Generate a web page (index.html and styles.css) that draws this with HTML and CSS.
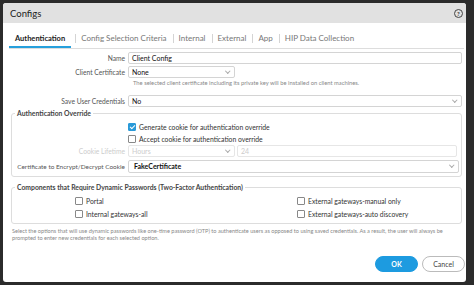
FILE: index.html
```html
<!DOCTYPE html>
<html lang="en">
<head>
  <meta charset="UTF-8" />
  <title>Configs</title>
  <link rel="stylesheet" href="styles.css">
</head>
<body>

  <div class="dialog">
    <header class="dlg-head">
      <h1>Configs</h1>
      <span class="help">?</span>
    </header>

    <nav class="tabs">
      <a href="#" class="tab active">Authentication</a>
      <span class="sep"></span>
      <a href="#" class="tab">Config Selection Criteria</a>
      <span class="sep"></span>
      <a href="#" class="tab">Internal</a>
      <span class="sep"></span>
      <a href="#" class="tab">External</a>
      <span class="sep"></span>
      <a href="#" class="tab">App</a>
      <span class="sep"></span>
      <a href="#" class="tab">HIP Data Collection</a>
    </nav>

    <div class="form">
      <div class="row">
        <label>Name</label>
        <div class="field grow">Client Config</div>
      </div>
      <div class="row">
        <label>Client Certificate</label>
        <div class="field select short">None<span class="chev"></span></div>
      </div>
      <p class="hint">The selected client certificate including its private key will be installed on client machines.</p>
      <div class="row">
        <label>Save User Credentials</label>
        <div class="field select grow">No<span class="chev"></span></div>
      </div>

      <!-- Authentication Override -->
      <fieldset class="group override">
        <legend>Authentication Override</legend>
        <div class="row check-row">
          <label></label>
          <span class="box checked"></span>Generate cookie for authentication override
        </div>
        <div class="row check-row">
          <label></label>
          <span class="box"></span>Accept cookie for authentication override
        </div>
        <div class="row disabled">
          <label>Cookie Lifetime</label>
          <div class="field select short">Hours<span class="chev"></span></div>
          <div class="field grow">24</div>
        </div>
        <div class="row cert-row">
          <label>Certificate to Encrypt/Decrypt Cookie</label>
          <div class="field select grow cert">FakeCertificate<span class="chev"></span></div>
        </div>
      </fieldset>

      <!-- Two-Factor -->
      <fieldset class="group components">
        <legend>Components that Require Dynamic Passwords (Two-Factor Authentication)</legend>
        <div class="checks">
          <div class="check-row"><span class="box"></span>Portal</div>
          <div class="check-row"><span class="box"></span>External gateways-manual only</div>
          <div class="check-row"><span class="box"></span>Internal gateways-all</div>
          <div class="check-row"><span class="box"></span>External gateways-auto discovery</div>
        </div>
      </fieldset>
      <p class="note">Select the options that will use dynamic passwords like one-time password (OTP) to authenticate users as opposed to using saved credentials. As a result, the user will always be prompted to enter new credentials for each selected option.</p>
    </div>

    <footer class="dlg-foot">
      <button class="btn ok">OK</button>
      <button class="btn cancel">Cancel</button>
    </footer>
  </div>

</body>
</html>
```

FILE: styles.css
```css
/* Reset */
* {
  margin: 0; padding: 0; box-sizing: border-box;
  font-family: 'Lato', 'Liberation Sans', sans-serif;
}

html, body {
  width: 474px;
  height: 285px;
  background: #2b2b2b;
  overflow: hidden;
}
body {
  padding: 3px 8px 3px 3px;
}

/* Dialog */
.dialog {
  width: 463px;
  height: 279px;
  background: #fff;
  border-radius: 3px;
  display: flex;
  flex-direction: column;
  color: #333;
  font-size: 7px;
}
.dlg-head {
  height: 20px;
  background: #e1e1e1;
  border-radius: 3px 3px 0 0;
  display: flex;
  align-items: center;
  justify-content: space-between;
  padding: 0 3px 0 7px;
}
.dlg-head h1 {
  font-size: 9.5px;
  font-weight: 400;
  color: #222;
}
.help {
  width: 9px;
  height: 9px;
  border: 1px solid #444;
  border-radius: 50%;
  font-size: 6px;
  font-weight: 700;
  line-height: 7px;
  text-align: center;
  color: #333;
}

/* Tabs */
.tabs {
  display: flex;
  align-items: center;
  margin: 4px 2px 0 6px;
  height: 22px;
  border-bottom: 1px solid #ddd;
}
.tab {
  color: #777;
  text-decoration: none;
  font-size: 8px;
  height: 21px;
  line-height: 23px;
  padding: 0 5px 0 3px;
}
.tab.active {
  color: #222;
  font-size: 7.5px;
  font-weight: 700;
  padding: 0 6px;
  margin-right: 3px;
  border-bottom: 2px solid #27a0dc;
}
.sep {
  width: 1px;
  height: 9px;
  margin: 2px 2px 0 1px;
  background: #d4d4d4;
}

/* Form rows */
.form {
  padding: 3px 4px 0 0;
  flex: 1;
}
.row {
  display: flex;
  align-items: center;
  height: 12px;
  margin-bottom: 2px;
}
.row label {
  width: 125px;
  flex-shrink: 0;
  text-align: right;
  padding-right: 3px;
  font-size: 6.7px;
  white-space: nowrap;
  color: #555;
}
.field {
  height: 12px;
  border: 1px solid #d4d4d4;
  border-radius: 2px;
  padding-left: 3px;
  line-height: 10px;
  color: #111;
  position: relative;
}
.grow { flex: 1; }
.short { width: 107px; }
.select .chev {
  position: absolute;
  right: 5px;
  top: 2px;
  width: 3.5px;
  height: 3.5px;
  border-right: 1px solid #aaa;
  border-bottom: 1px solid #aaa;
  transform: rotate(45deg);
}
.hint {
  margin: -1px 0 8px 130px;
  font-size: 5.8px;
  color: #888;
  height: 8px;
  line-height: 8px;
}

/* Groups */
.group {
  border: 1px solid #ddd;
  border-radius: 3px;
  margin: 0 0 0 8px;
  padding: 3px 2px 1px 0;
}
.group legend {
  font-weight: 700;
  color: #444;
  padding: 0 2px;
  margin-left: 3px;
  font-size: 6.8px;
  line-height: 9px;
}
.override {
  margin-top: 1px;
}
.override .row label {
  width: 116px;
}
.override .cert-row label {
  font-size: 6.45px;
}
.check-row {
  display: flex;
  align-items: center;
  height: 12px;
  font-size: 6.8px;
  color: #333;
}
.override .check-row {
  margin-bottom: 0;
}
.box {
  width: 8px;
  height: 8px;
  border: 1px solid #888;
  border-radius: 1px;
  margin-right: 3px;
  flex-shrink: 0;
  position: relative;
}
.box.checked {
  background: #2a9ad8;
  border-color: #2a9ad8;
}
.box.checked::after {
  content: "";
  position: absolute;
  left: 2px;
  top: 0;
  width: 2px;
  height: 4px;
  border-right: 1px solid #fff;
  border-bottom: 1px solid #fff;
  transform: rotate(45deg);
}
.disabled {
  margin-bottom: 3px;
}
.disabled label { color: #ccc; }
.disabled .field {
  color: #ccc;
  border-color: #e6e6e6;
}
.disabled .field + .field {
  margin-left: 2px;
  margin-right: 2px;
}
.cert-row {
  height: 13px;
}
.cert-row .field {
  height: 13px;
  line-height: 11px;
}
.cert {
  font-weight: 700;
  padding-left: 5px;
}

.components {
  margin-top: 6px;
  padding: 2px 0 3px 0;
}
.components .check-row {
  height: 13px;
}
.checks {
  display: grid;
  grid-template-columns: 222px 1fr;
  padding-left: 63px;
}
.note {
  margin: 3px 8px 0 9px;
  font-size: 5.6px;
  line-height: 7px;
  color: #888;
}

/* Footer */
.dlg-foot {
  display: flex;
  justify-content: flex-end;
  gap: 4px;
  padding: 0 1px 10px 0;
}
.btn {
  width: 43px;
  height: 16px;
  border-radius: 8px;
  font-size: 7px;
  cursor: pointer;
}
.btn.ok {
  background: #1d9be0;
  border: 1px solid #1d9be0;
  color: #fff;
  font-weight: 700;
}
.btn.cancel {
  background: #fff;
  border: 1px solid #bbb;
  color: #444;
}
```
